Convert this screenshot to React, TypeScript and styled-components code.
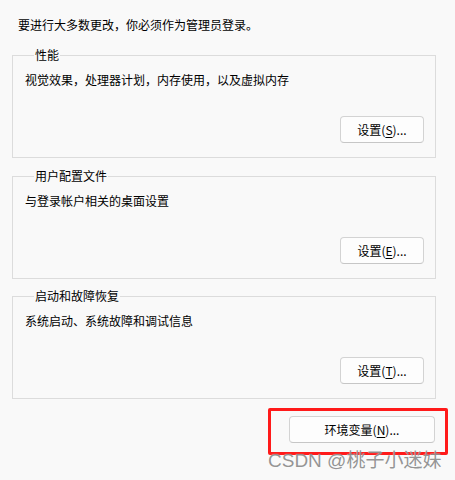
import React from "react";
import styled, { createGlobalStyle } from "styled-components";

const Global = createGlobalStyle`
  html, body { margin: 0; padding: 0; background: #f9f9f9; }
  body { font-family: "Microsoft YaHei UI", "Noto Sans CJK SC", "Noto Sans", sans-serif; color: #000; }
`;

const Page = styled.div`
  position: relative;
  width: 455px;
  height: 480px;
  box-sizing: border-box;
  padding: 17px 19px 0 12px;
  display: flex;
  flex-direction: column;
`;

const Intro = styled.div`
  font-size: 12px;
  line-height: 16px;
  padding-left: 6px;
  margin-bottom: 14px;
`;

const Group = styled.fieldset<{ $gap: number }>`
  margin: 0 0 ${(p) => p.$gap}px 0;
  padding: 9px 11px 14px 12px;
  border: 1px solid #dcdcdc;
  border-radius: 0;
  min-width: 0;
  display: flex;
  flex-direction: column;
`;

const Legend = styled.legend`
  font-size: 12px;
  line-height: 16px;
  padding: 0 1px;
  margin-left: 9px;
`;

const Desc = styled.div`
  font-size: 12px;
  line-height: 16px;
  margin-bottom: 28px;
`;

const ButtonRow = styled.div<{ $right?: number }>`
  display: flex;
  justify-content: flex-end;
  padding-right: ${(p) => p.$right ?? 0}px;
`;

const Button = styled.button<{ $w: number }>`
  width: ${(p) => p.$w}px;
  height: 27px;
  box-sizing: border-box;
  background: #fdfdfd;
  border: 1px solid #d3d3d3;
  border-bottom-color: #c6c6c6;
  border-radius: 4px;
  font-family: inherit;
  font-size: 12px;
  line-height: 16px;
  color: #000;
  padding: 0;
  margin: 0;
  u { text-decoration-thickness: 1px; text-underline-offset: 2px; }
`;

const Highlight = styled.div`
  position: absolute;
  left: 268px;
  top: 408px;
  width: 180px;
  height: 47px;
  box-sizing: border-box;
  border: 3px solid #ff1a1a;
  border-radius: 2px;
  pointer-events: none;
`;

const Watermark = styled.div`
  position: absolute;
  left: 268px;
  top: 450px;
  font-family: "Liberation Sans", "Noto Sans CJK SC", sans-serif;
  font-size: 19px;
  line-height: 22px;
  color: rgba(120, 120, 120, 0.8);
  text-shadow: 0 0 1px rgba(255, 255, 255, 0.8);
  white-space: nowrap;
  pointer-events: none;
`;

const groups = [
  { title: "性能", desc: "视觉效果，处理器计划，内存使用，以及虚拟内存", key: "S", gap: 10 },
  { title: "用户配置文件", desc: "与登录帐户相关的桌面设置", key: "E", gap: 9 },
  { title: "启动和故障恢复", desc: "系统启动、系统故障和调试信息", key: "T", gap: 17 },
];

export default function App() {
  return (
    <>
      <Global />
      <Page>
        <Intro>要进行大多数更改，你必须作为管理员登录。</Intro>
        {groups.map((g) => (
          <Group key={g.key} $gap={g.gap}>
            <Legend>{g.title}</Legend>
            <Desc>{g.desc}</Desc>
            <ButtonRow>
              <Button $w={84}>
                设置(<u>{g.key}</u>)...
              </Button>
            </ButtonRow>
          </Group>
        ))}
        <ButtonRow $right={1}>
          <Button $w={146}>
            环境变量(<u>N</u>)...
          </Button>
        </ButtonRow>
        <Highlight />
        <Watermark>CSDN @桃子小迷妹</Watermark>
      </Page>
    </>
  );
}
